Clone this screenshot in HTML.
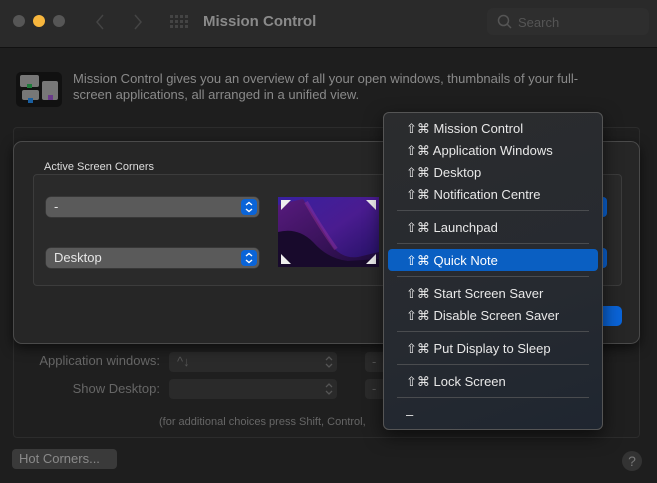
<!DOCTYPE html>
<html><head><meta charset="utf-8"><style>
*{margin:0;padding:0;box-sizing:border-box}
body{width:657px;height:483px;background:#1e1e1e;font-family:"Liberation Sans",sans-serif;position:relative;overflow:hidden;color:#ddd}
.a{position:absolute}
.tl{width:12px;height:12px;border-radius:50%;top:15px}
.pop{position:absolute;height:20px;border-radius:5px;background:#5a5a5a;font-size:13px;color:#e6e6e6;padding:3px 8px;box-shadow:0 0 0 0.5px #444}
.arr{position:absolute;right:2px;top:2px;width:16px;height:16px;border-radius:4px;background:#0a64d8}
.mi{position:absolute;left:406px;font-size:13px;color:#e8e8e8;white-space:nowrap}
.sep{position:absolute;left:397px;width:192px;height:1px;background:#4a4c4f}
</style></head><body>
<div class="a" style="left:0;top:0;width:657px;height:48px;background:#2a2a2a;border-bottom:1px solid #111"></div>
<div class="a tl" style="left:13px;background:#565656"></div>
<div class="a tl" style="left:33px;background:#f7b63d"></div>
<div class="a tl" style="left:53px;background:#565656"></div>
<svg class="a" style="left:93px;top:13px" width="60" height="18"><path d="M10 2 L4 9 L10 16" stroke="#444" stroke-width="1.5" fill="none"/><path d="M42 2 L48 9 L42 16" stroke="#444" stroke-width="1.5" fill="none"/></svg>
<svg class="a" style="left:170px;top:15px" width="18" height="14"><g fill="#444"><rect x="0" y="0" width="3" height="3"/><rect x="5" y="0" width="3" height="3"/><rect x="10" y="0" width="3" height="3"/><rect x="15" y="0" width="3" height="3"/><rect x="0" y="5" width="3" height="3"/><rect x="5" y="5" width="3" height="3"/><rect x="10" y="5" width="3" height="3"/><rect x="15" y="5" width="3" height="3"/><rect x="0" y="10" width="3" height="3"/><rect x="5" y="10" width="3" height="3"/><rect x="10" y="10" width="3" height="3"/><rect x="15" y="10" width="3" height="3"/></g></svg>
<div class="a" style="left:203px;top:13px;font-size:15px;font-weight:bold;color:#8a8a8a">Mission Control</div>
<div class="a" style="left:487px;top:8px;width:162px;height:27px;border-radius:6px;background:#2e2e2e"></div>
<svg class="a" style="left:497px;top:14px" width="16" height="16"><circle cx="6.5" cy="6.5" r="5" stroke="#555" stroke-width="1.5" fill="none"/><path d="M10 10 L14 14" stroke="#555" stroke-width="1.5"/></svg>
<div class="a" style="left:518px;top:15px;font-size:13px;color:#555">Search</div>
<div class="a" style="left:16px;top:72px;width:46px;height:35px;border-radius:5px;background:#111"></div>
<div class="a" style="left:20px;top:75px;width:19px;height:12px;background:#777;border-radius:2px"></div>
<div class="a" style="left:42px;top:81px;width:16px;height:19px;background:#777;border-radius:2px"></div>
<div class="a" style="left:22px;top:90px;width:17px;height:10px;background:#777;border-radius:2px"></div>
<div class="a" style="left:27px;top:84px;width:5px;height:4px;background:#1e7a3a"></div>
<div class="a" style="left:28px;top:98px;width:5px;height:5px;background:#1a5fa0"></div>
<div class="a" style="left:48px;top:95px;width:5px;height:5px;background:#6a3a8a"></div>
<div class="a" style="left:73px;top:71px;font-size:13px;line-height:16px;color:#8a8a8a;width:560px">Mission Control gives you an overview of all your open windows, thumbnails of your full-<br>screen applications, all arranged in a unified view.</div>
<div class="a" style="left:13px;top:127px;width:627px;height:311px;border:1px solid #2c2c2c;border-radius:4px;background:#1f1f1f"></div>
<div class="a" style="left:33px;top:353px;width:127px;text-align:right;font-size:13px;color:#666">Application windows:</div>
<div class="a" style="left:33px;top:381px;width:127px;text-align:right;font-size:13px;color:#666">Show Desktop:</div>
<div class="a" style="left:169px;top:352px;width:168px;height:20px;background:#2a2a2a;border-radius:4px;font-size:13px;color:#555;padding:2px 8px">^↓</div>
<div class="a" style="left:169px;top:379px;width:168px;height:20px;background:#2a2a2a;border-radius:4px"></div>
<svg class="a" style="left:324px;top:355px" width="10" height="14"><path d="M2 5 L5 2 L8 5 M2 9 L5 12 L8 9" stroke="#555" stroke-width="1.3" fill="none"/></svg>
<svg class="a" style="left:324px;top:382px" width="10" height="14"><path d="M2 5 L5 2 L8 5 M2 9 L5 12 L8 9" stroke="#555" stroke-width="1.3" fill="none"/></svg>
<div class="a" style="left:365px;top:352px;width:30px;height:20px;background:#2a2a2a;border-radius:4px;color:#555;font-size:13px;padding:2px 7px">-</div>
<div class="a" style="left:365px;top:379px;width:30px;height:20px;background:#2a2a2a;border-radius:4px;color:#555;font-size:13px;padding:2px 7px">-</div>
<div class="a" style="left:159px;top:416px;font-size:11px;color:#666">(for additional choices press Shift, Control,</div>
<div class="a" style="left:12px;top:449px;width:105px;height:20px;background:#3a3a3a;border-radius:4px;font-size:13px;color:#8a8a8a;padding:2px 7px">Hot Corners...</div>
<div class="a" style="left:622px;top:451px;width:20px;height:20px;border-radius:50%;background:#333;color:#777;font-size:14px;text-align:center;line-height:20px">?</div>
<div class="a" style="left:13px;top:141px;width:627px;height:203px;background:#262626;border:1px solid #4a4a4a;border-radius:9px;box-shadow:0 4px 12px rgba(0,0,0,.6)"></div>
<div class="a" style="left:44px;top:161px;font-size:11px;color:#ddd">Active Screen Corners</div>
<div class="a" style="left:33px;top:174px;width:589px;height:112px;border:1px solid #3c3c3c;border-radius:4px;background:#2a2a2a"></div>
<div class="pop" style="left:46px;top:197px;width:213px;padding-top:2px">-<div class="arr"><svg width="16" height="16"><path d="M5 6 L8 3.5 L11 6 M5 10 L8 12.5 L11 10" stroke="#fff" stroke-width="1.4" fill="none"/></svg></div></div>
<div class="pop" style="left:46px;top:248px;width:213px;padding-top:2px">Desktop<div class="arr"><svg width="16" height="16"><path d="M5 6 L8 3.5 L11 6 M5 10 L8 12.5 L11 10" stroke="#fff" stroke-width="1.4" fill="none"/></svg></div></div>
<svg class="a" style="left:278px;top:197px" width="101" height="70">
<defs><linearGradient id="g" x1="0" y1="0" x2="1" y2="1"><stop offset="0" stop-color="#3820a0"/><stop offset="0.5" stop-color="#4a1c90"/><stop offset="1" stop-color="#201060"/></linearGradient>
<linearGradient id="h" x1="0" y1="0" x2="1" y2="1"><stop offset="0" stop-color="#5a1a7a"/><stop offset="1" stop-color="#1a0a35"/></linearGradient></defs>
<rect width="101" height="70" fill="url(#g)"/>
<path d="M0 8 Q15 4 25 2 Q40 25 55 50 Q65 62 80 60 L101 55 L101 70 L0 70Z" fill="url(#h)" opacity=".9"/>
<path d="M0 35 Q20 30 35 45 Q50 62 70 64 L101 62 L101 70 L0 70Z" fill="#180a2c"/>
<path d="M28 5 Q42 30 58 52" stroke="#b03aa0" stroke-width="4" fill="none" opacity=".35"/>
<g fill="#eee"><path d="M3 3h10L3 13z"/><path d="M98 3h-10L98 13z"/><path d="M3 67h10L3 57z"/><path d="M98 67h-10L98 57z"/></g></svg>
<div class="a" style="left:590px;top:197px;width:17px;height:20px;background:#0a64d8;border-radius:4px"></div>
<div class="a" style="left:590px;top:248px;width:17px;height:20px;background:#0a64d8;border-radius:4px"></div>
<div class="a" style="left:580px;top:306px;width:42px;height:20px;background:#0a64d8;border-radius:5px"></div>
<div class="a" style="left:383px;top:112px;width:220px;height:318px;background:linear-gradient(160deg,#2b2c2e,#262a30 60%,#1f2630);border:1px solid #555;border-radius:6px;box-shadow:0 6px 18px rgba(0,0,0,.6)"></div>
<div class="a" style="left:388px;top:249px;width:210px;height:22px;background:#0a5fc2;border-radius:4px"></div>
<div class="mi" style="top:121px">⇧⌘ Mission Control</div>
<div class="mi" style="top:143px">⇧⌘ Application Windows</div>
<div class="mi" style="top:165px">⇧⌘ Desktop</div>
<div class="mi" style="top:187px">⇧⌘ Notification Centre</div>
<div class="sep" style="top:210px"></div>
<div class="mi" style="top:220px">⇧⌘ Launchpad</div>
<div class="sep" style="top:243px"></div>
<div class="mi" style="top:253px;color:#fff">⇧⌘ Quick Note</div>
<div class="sep" style="top:276px"></div>
<div class="mi" style="top:286px">⇧⌘ Start Screen Saver</div>
<div class="mi" style="top:308px">⇧⌘ Disable Screen Saver</div>
<div class="sep" style="top:331px"></div>
<div class="mi" style="top:341px">⇧⌘ Put Display to Sleep</div>
<div class="sep" style="top:364px"></div>
<div class="mi" style="top:374px">⇧⌘ Lock Screen</div>
<div class="sep" style="top:397px"></div>
<div class="mi" style="top:407px">–</div>
</body></html>
